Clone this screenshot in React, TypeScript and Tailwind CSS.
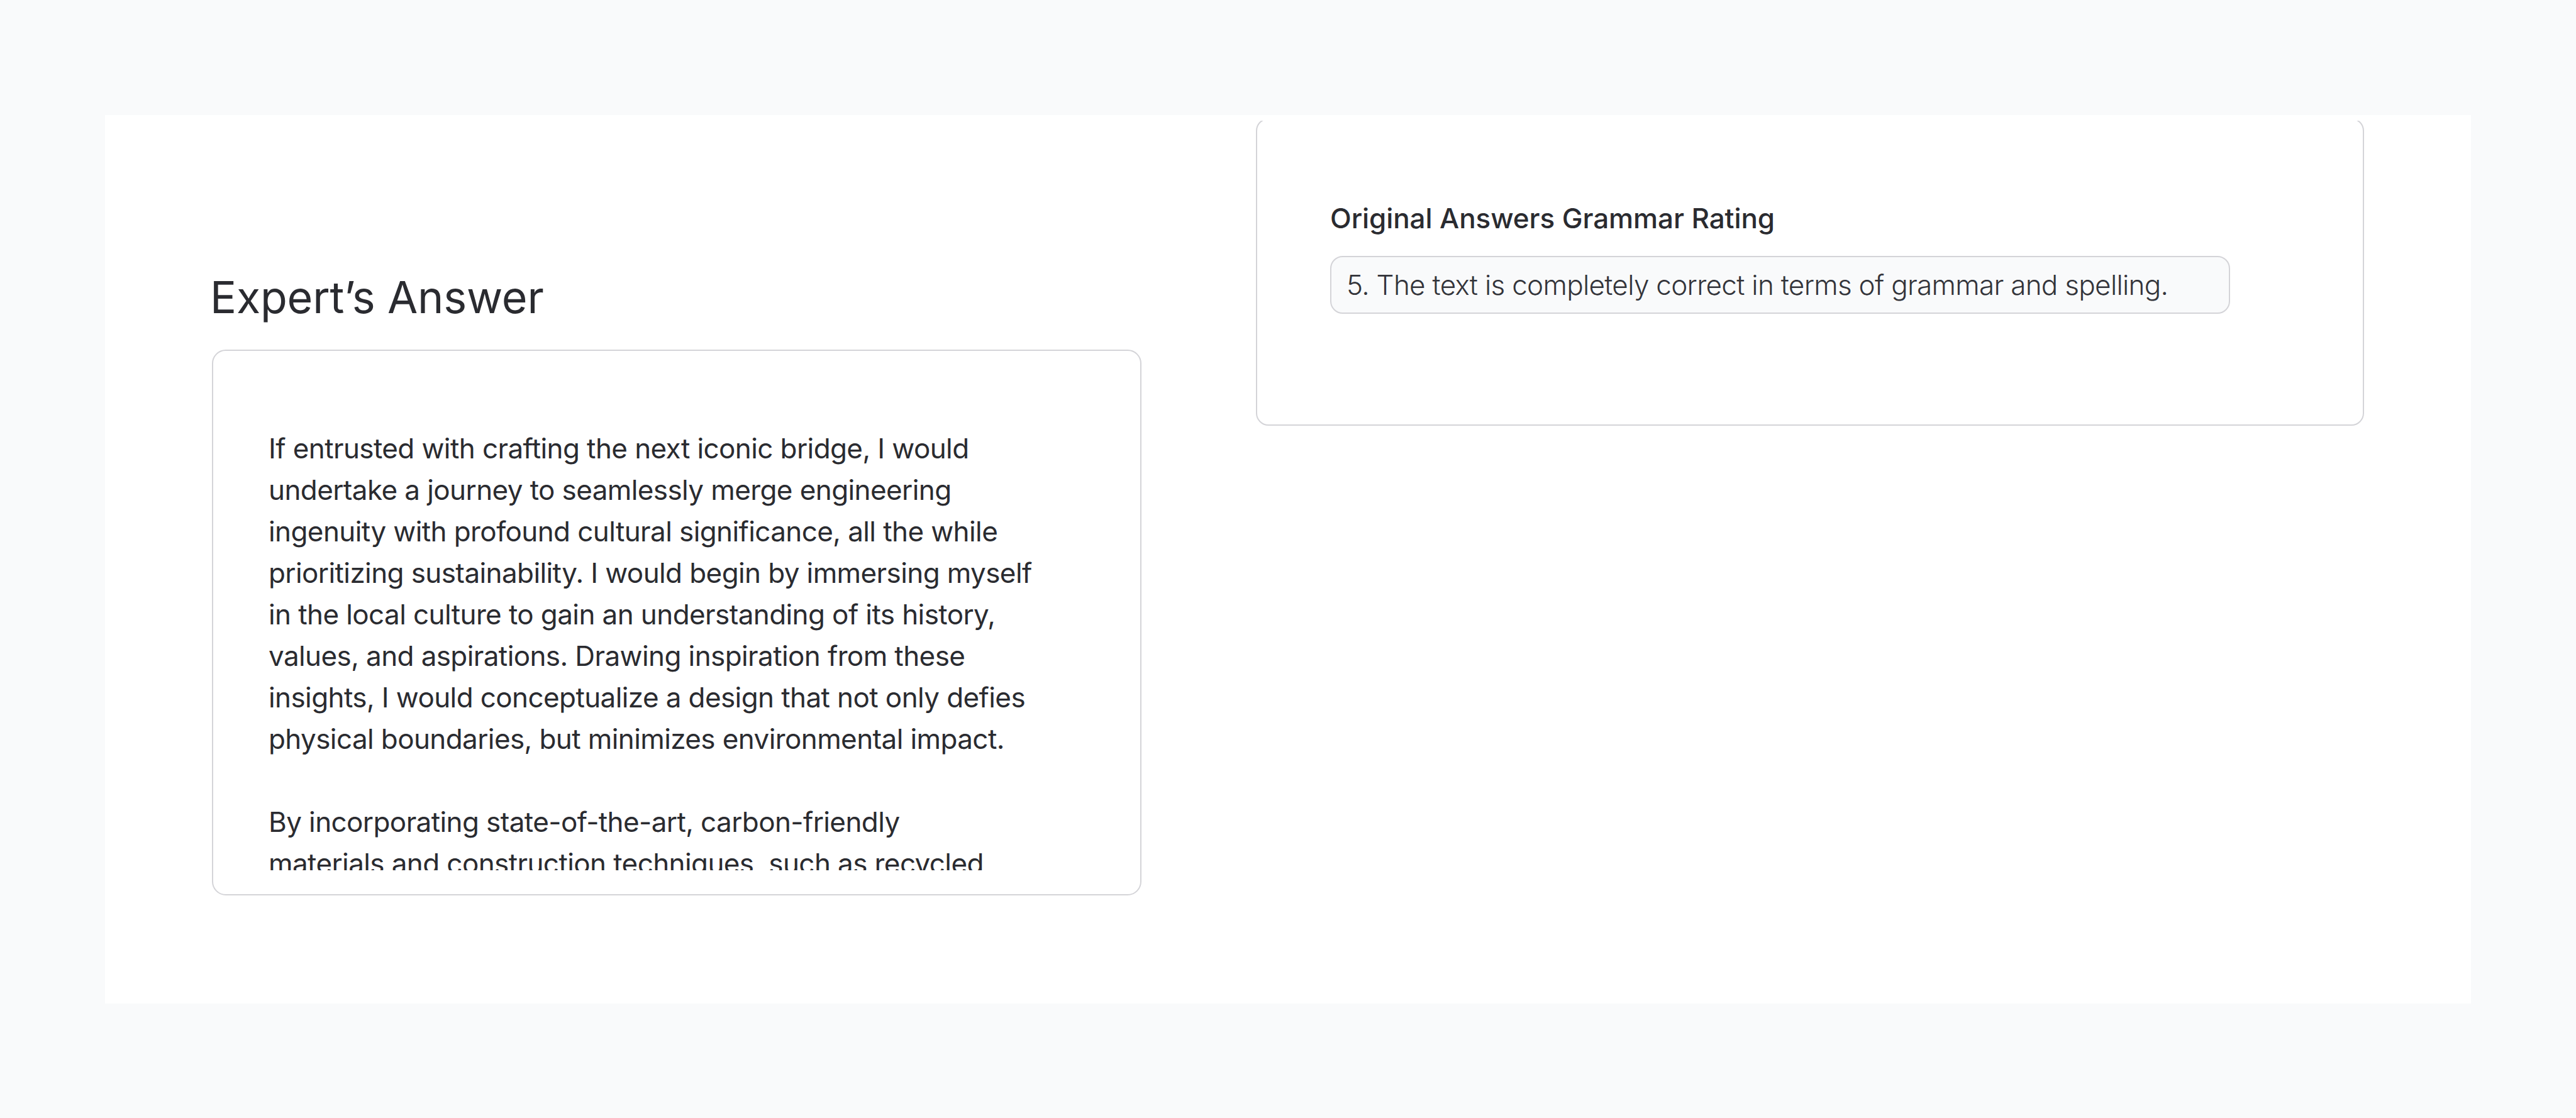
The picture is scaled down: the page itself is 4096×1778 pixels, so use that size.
const paragraphs: string[][] = [
  [
    'If entrusted with crafting the next iconic bridge, I would',
    'undertake a journey to seamlessly merge engineering',
    'ingenuity with profound cultural significance, all the while',
    'prioritizing sustainability. I would begin by immersing myself',
    'in the local culture to gain an understanding of its history,',
    'values, and aspirations. Drawing inspiration from these',
    'insights, I would conceptualize a design that not only defies',
    'physical boundaries, but minimizes environmental impact.',
  ],
  [
    'By incorporating state-of-the-art, carbon-friendly',
    'materials and construction techniques, such as recycled',
    'steel and low-carbon concrete, the bridge would stand as a',
    'testament to responsible engineering.',
  ],
];

function ExpertAnswer() {
  return (
    <div className="flex w-[1478px] shrink-0 flex-col pt-[250px]">
      <h2 className="-ml-[3px] h-[80px] text-[70px] leading-[80px] font-normal tracking-[-0.2px] text-[#2a2b30]">
        Expert’s Answer
      </h2>
      <div className="mt-[43px] flex h-[868px] flex-col rounded-[22px] border-2 border-[#d4d4d8] bg-white pb-[38px]">
        <div className="flex-1 overflow-hidden px-[88px] pt-[122px]">
          {paragraphs.map((lines, i) => (
            <p
              key={i}
              className="mb-[66px] whitespace-nowrap text-[44px] leading-[66px] tracking-[-0.6px] text-[#2a2b30]"
            >
              {lines.map((line, j) => (
                <span key={j} className="block">
                  {line}
                </span>
              ))}
            </p>
          ))}
        </div>
      </div>
    </div>
  );
}

function GrammarRating() {
  return (
    <div className="mt-[9px] h-[520px] flex-1 overflow-hidden">
      <div className="-mt-[4px] rounded-[20px] border-2 border-[#d4d4d8] bg-white px-[116px] pt-[124px] pb-[176px]">
        <div className="text-[44px] leading-[66px] font-medium tracking-[-0.1px] text-[#2a2b30]">
          Original Answers Grammar Rating
        </div>
        <div className="mt-[27px] flex h-[92px] w-[1431px] items-center rounded-[20px] border-2 border-[#d4d4d8] bg-[#f9fafb] pl-[24px]">
          <span className="text-[44px] leading-[66px] font-light tracking-[-0.7px] text-[#33343a]">
            5. The text is completely correct in terms of grammar and spelling.
          </span>
        </div>
      </div>
    </div>
  );
}

export default function App() {
  return (
    <div
      className="h-[1778px] w-full bg-[#f9fafb] px-[167px] pt-[183px]"
      style={{ fontFamily: 'Inter, "Noto Sans", sans-serif' }}
    >
      <div className="flex h-[1413px] gap-[182px] bg-white px-[170px]">
        <ExpertAnswer />
        <GrammarRating />
      </div>
    </div>
  );
}
